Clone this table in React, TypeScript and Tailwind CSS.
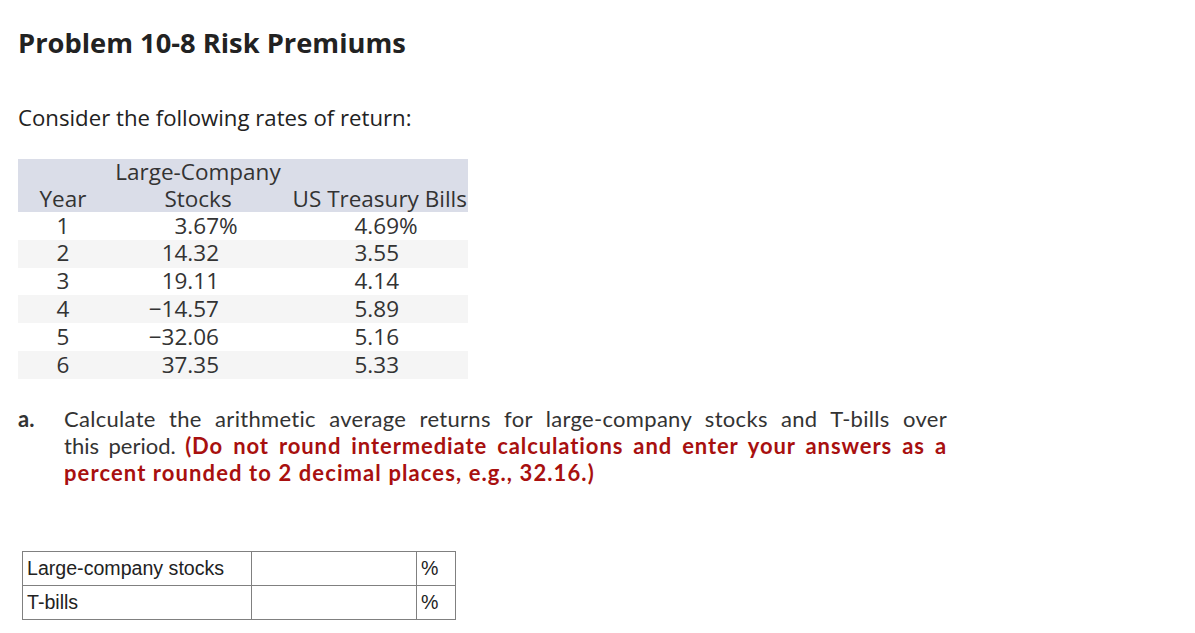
const rows = [
  { year: '1', stocks: '3.67', bills: '4.69', pct: true },
  { year: '2', stocks: '14.32', bills: '3.55' },
  { year: '3', stocks: '19.11', bills: '4.14' },
  { year: '4', stocks: '\u221214.57', bills: '5.89' },
  { year: '5', stocks: '\u221232.06', bills: '5.16' },
  { year: '6', stocks: '37.35', bills: '5.33' },
];

// number right-aligned in its cell, with the % sign hanging past the edge
const Num = ({ value, pct, width }: { value: string; pct?: boolean; width: string }) => (
  <div className={`flex ${width}`}>
    <span className="flex-1 text-right">{value}</span>
    <span className="w-0 overflow-visible whitespace-nowrap">{pct ? '%' : ''}</span>
  </div>
);

const App = () => {
  return (
    <div className="min-h-screen bg-white pl-[18px] pt-[26px] text-[#222] [font-family:'Open_Sans',Lato,sans-serif]">
      <h1 className="text-[27.3px] font-bold leading-[34px]">Problem 10-8 Risk Premiums</h1>

      <p className="mt-[44px] text-[22.2px] leading-[28px]">Consider the following rates of return:</p>

      <div className="mt-[27px] w-[450px] text-[22.5px] leading-[26.5px] text-[#333]">
        <div className="flex bg-[#dadde8]">
          <div className="flex w-[90px] items-end justify-center">Year</div>
          <div className="flex w-[180px] flex-col items-center">
            <span>Large-Company</span>
            <span>Stocks</span>
          </div>
          <div className="flex flex-1 items-end justify-end pr-[1px]">US Treasury Bills</div>
        </div>
        {rows.map((r, i) => (
          <div key={r.year} className={`flex h-[27.8px] items-center ${i % 2 ? 'bg-[#f5f5f5]' : 'bg-white'}`}>
            <div className="w-[90px] text-center">{r.year}</div>
            <Num value={r.stocks} pct={r.pct} width="w-[111px]" />
            <Num value={r.bills} pct={r.pct} width="w-[180px]" />
          </div>
        ))}
      </div>

      <div className="mt-[26px] flex w-[929px] text-[22px] leading-[27px] text-[#333] [font-family:Lato,sans-serif]">
        <span className="w-[46px] shrink-0 font-bold">a.</span>
        <div className="flex-1">
          <p className="text-justify tracking-[0.3px] [text-align-last:justify]">
            Calculate the arithmetic average returns for large-company stocks and T-bills over
          </p>
          <p className="text-justify [text-align-last:justify]">
            this period.{' '}
            <span className="font-bold tracking-[0.9px] text-[#a8100f]">
              (Do not round intermediate calculations and enter your answers as a
            </span>
          </p>
          <p className="font-bold tracking-[1.1px] text-[#a8100f]">percent rounded to 2 decimal places, e.g., 32.16.)</p>
        </div>
      </div>

      <table className="ml-[4px] mt-[65px] border-collapse text-[19.6px] leading-[33px] text-[#222] [font-family:'Liberation_Sans',Arial,sans-serif]">
        <tbody>
          {['Large-company stocks', 'T-bills'].map((label) => (
            <tr key={label}>
              <td className="w-[229px] border border-[#808080] px-[4px] py-0">{label}</td>
              <td className="w-[165px] border border-[#808080]"></td>
              <td className="w-[39px] border border-[#808080] px-[4px]">%</td>
            </tr>
          ))}
        </tbody>
      </table>
    </div>
  );
};

export default App;
